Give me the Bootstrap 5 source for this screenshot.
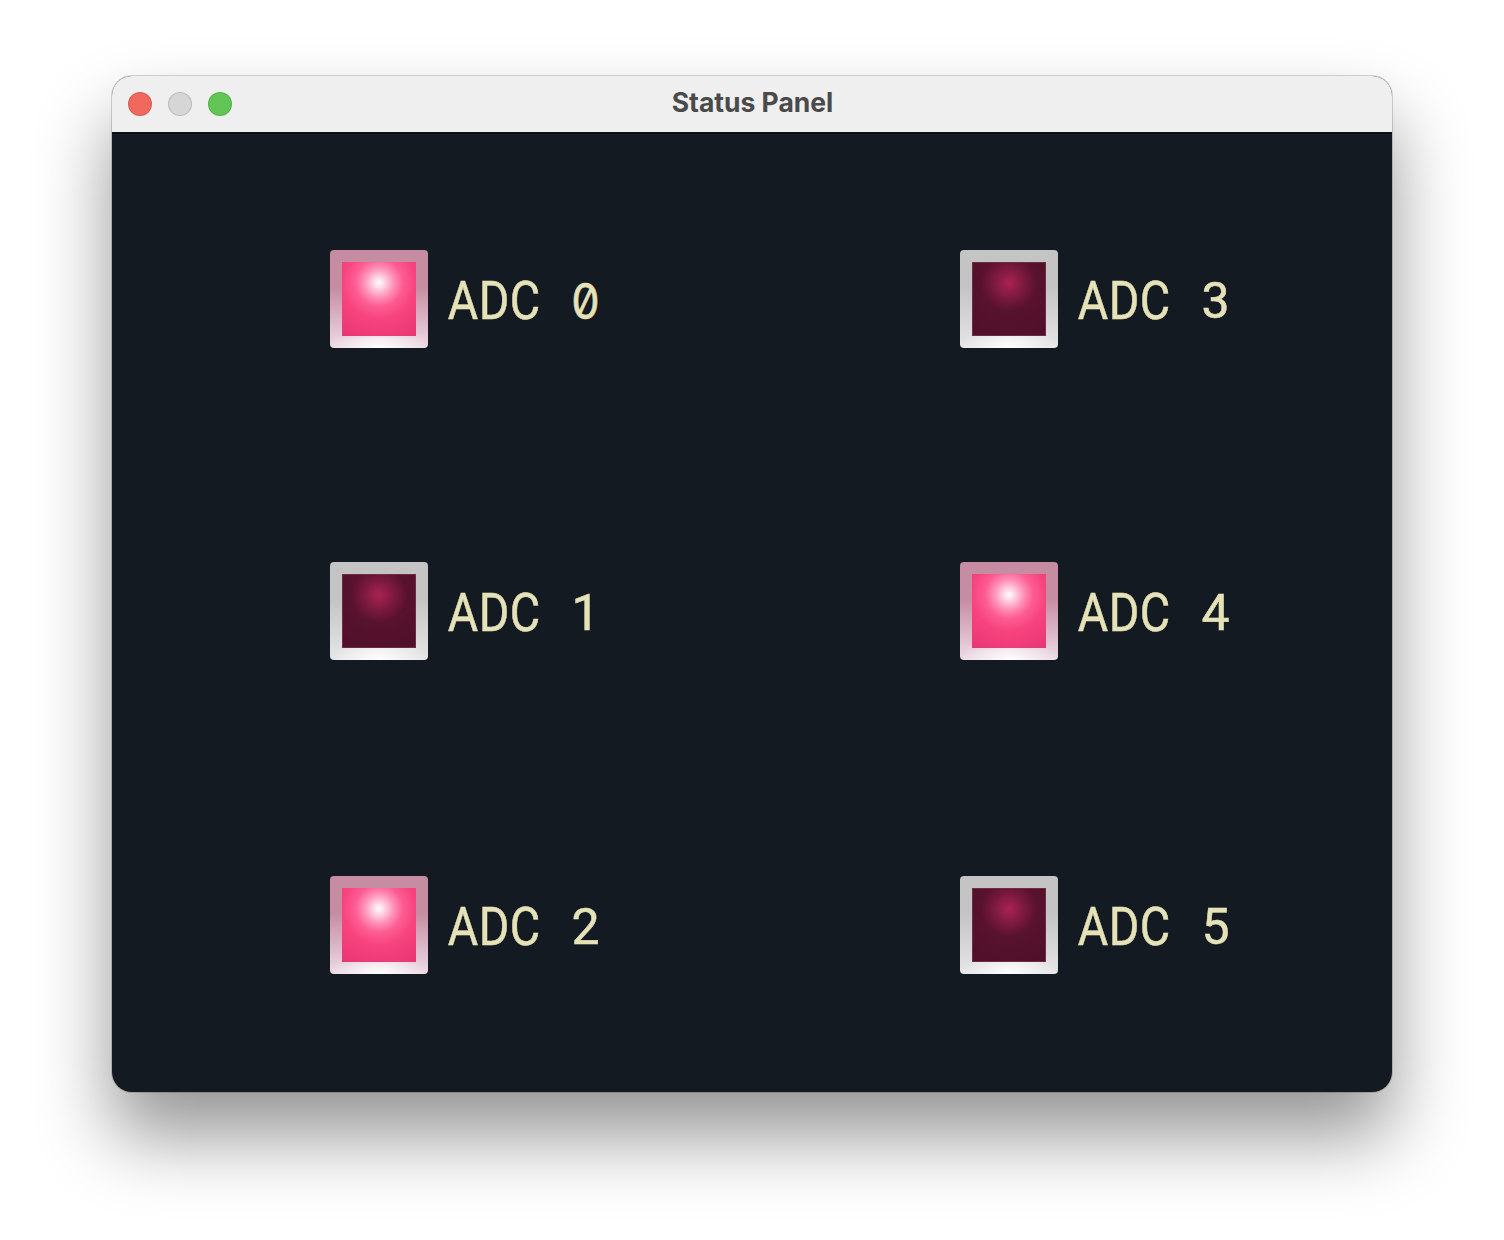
<!doctype html>
<html><head><meta charset="utf-8">
<link href="https://cdn.jsdelivr.net/npm/bootstrap@5.3.0/dist/css/bootstrap.min.css" rel="stylesheet">
<style>
html,body{background:#fff}
.desk{padding:76px 112px 148px}
.win{width:1280px;height:1016px;border-radius:20px;box-shadow:0 44px 76px rgba(0,0,0,.42),0 0 0 1px rgba(0,0,0,.16);overflow:hidden;background:#141a22}
.titlebar{height:58px;background:#efefef;border-bottom:2px solid #0c0f14;padding:0 16px;position:relative}
.lamp{width:24px;height:24px;border-radius:50%;border:1px solid rgba(0,0,0,.12)}
.lamp-r{background:#f1695e}.lamp-g{background:#d6d6d6}.lamp-v{background:#61c655}
.wtitle{position:absolute;left:0;right:-1px;top:0;text-align:center;font:700 26.5px/53px Inter,sans-serif;color:#4a4a4a}
.panel{display:grid;grid-template-columns:630px 1fr;grid-template-rows:312px 312px 316px;padding:9px 0 0 218px}
.led{width:98px;height:98px;padding:12px;border-radius:4px;background:radial-gradient(ellipse 50% 26% at 50% 100%,rgba(255,255,255,.95),rgba(255,255,255,0)),linear-gradient(#c4c4c4 0,#c4c4c4 38%,#e6e6e6 100%)}
.led.lit{background:radial-gradient(ellipse 50% 26% at 50% 100%,rgba(255,255,255,.95),rgba(255,255,255,0)),linear-gradient(#c68ca2 0,#c68ca2 38%,#eddbe5 100%)}
.core{height:74px;background:radial-gradient(circle at 50% 28%,#aa2250 0,#7e1a40 14px,#58122d 28px,#4f1029 100%);border:1px solid #6e2a46}
.lit .core{border:0;background:radial-gradient(circle at 50% 28%,#fff 0,#ffd2e2 6px,#ff8fb6 15px,#fd5c92 24px,#f7447f 36px,#ec3a76 56px,#e63672 100%)}
.tag{font:400 53px/1 Roboto,sans-serif;color:#e6e2b8;margin-left:18px;padding-top:4px;display:flex;-webkit-text-stroke:.5px #e6e2b8}
.tag b{font-weight:400;display:inline-block;width:31px;text-align:center;transform:scaleX(.88)}
.tag b.digit{transform:none;font-size:50px;line-height:53px}
.tag b.zero{font-family:Inter,sans-serif;font-feature-settings:"zero";font-size:49px;line-height:53px;transform:scaleX(.92)}
</style></head><body>
<div class="desk"><div class="win">
<div class="titlebar d-flex align-items-center gap-3"><span class="lamp lamp-r"></span><span class="lamp lamp-g"></span><span class="lamp lamp-v"></span><div class="wtitle">Status Panel</div></div>
<div class="panel">
<div class="d-flex align-items-center"><div class="led lit"><div class="core"></div></div><div class="tag"><b>A</b><b>D</b><b>C</b><b>&nbsp;</b><b class="zero">0</b></div></div>
<div class="d-flex align-items-center"><div class="led"><div class="core"></div></div><div class="tag"><b>A</b><b>D</b><b>C</b><b>&nbsp;</b><b class="digit">3</b></div></div>
<div class="d-flex align-items-center"><div class="led"><div class="core"></div></div><div class="tag"><b>A</b><b>D</b><b>C</b><b>&nbsp;</b><b class="digit">1</b></div></div>
<div class="d-flex align-items-center"><div class="led lit"><div class="core"></div></div><div class="tag"><b>A</b><b>D</b><b>C</b><b>&nbsp;</b><b class="digit">4</b></div></div>
<div class="d-flex align-items-center"><div class="led lit"><div class="core"></div></div><div class="tag"><b>A</b><b>D</b><b>C</b><b>&nbsp;</b><b class="digit">2</b></div></div>
<div class="d-flex align-items-center"><div class="led"><div class="core"></div></div><div class="tag"><b>A</b><b>D</b><b>C</b><b>&nbsp;</b><b class="digit">5</b></div></div>
</div>
</div></div>
<script src="https://cdn.jsdelivr.net/npm/bootstrap@5.3.0/dist/js/bootstrap.bundle.min.js"></script>
</body></html>
